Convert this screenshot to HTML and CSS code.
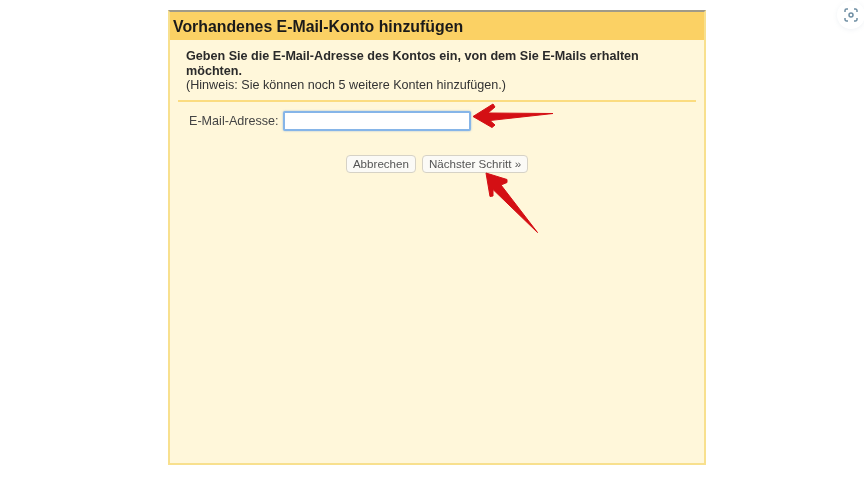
FILE: index.html
```html
<!DOCTYPE html>
<html lang="de">
<head>
<meta charset="utf-8">
<title>Vorhandenes E-Mail-Konto hinzufügen</title>
<link rel="stylesheet" href="styles.css">
</head>
<body>
<main class="panel">
  <h1 class="title">Vorhandenes E-Mail-Konto hinzufügen</h1>
  <div class="content">
    <div class="intro">
      <p class="lead">Geben Sie die E-Mail-Adresse des Kontos ein, von dem Sie E-Mails erhalten möchten.</p>
      <p class="hint">(Hinweis: Sie können noch 5 weitere Konten hinzufügen.)</p>
    </div>
    <div class="field">
      <label class="label" for="mail">E-Mail-Adresse:</label>
      <input class="input" id="mail" type="text">
    </div>
    <div class="actions">
      <button class="btn" type="button">Abbrechen</button>
      <button class="btn" type="button">Nächster Schritt »</button>
    </div>
  </div>
</main>
<svg class="arrows" viewBox="0 0 864 486" aria-hidden="true">
  <path d="M473 116.500L493 104L495 107L488 113L553 113.500L490 120.500L495 125L492 127.500Z"/>
  <path d="M486 173L507 179.500L507 182.500L501 185L537.500 232.500L493 189.500L493 196L490 196.500Z"/>
</svg>
<div class="lens">
  <svg class="lens-icon" viewBox="0 0 16 16" aria-hidden="true">
    <path d="M2 5V3.500A1.500 1.500 0 0 1 3.500 2H5M11 2h1.500A1.500 1.500 0 0 1 14 3.500V5M14 11v1.500a1.500 1.500 0 0 1-1.500 1.500H11M5 14H3.500A1.500 1.500 0 0 1 2 12.500V11"/>
    <circle cx="8" cy="8" r="2"/>
  </svg>
</div>
</body>
</html>
```

FILE: styles.css
```css
* { box-sizing: border-box; }
html, body { margin: 0; height: 100%; background: #fff; overflow: hidden; }
body { font-family: "Liberation Sans", Arial, sans-serif; color: #222; }

.panel {
  width: 538px;
  height: 455px;
  margin: 10px 0 0 168px;
  background: #fff7da;
  border: 2px solid #f8e08e;
  border-top: 2px solid #a09a88;
  filter: blur(0.4px);
}
.title {
  margin: 0;
  height: 28px;
  padding: 0 0 0 3px;
  background: #fbd164;
  font-size: 15.850px;
  font-weight: bold;
  line-height: 30px;
  color: #1a1a1a;
}
.content { padding: 0 8px; }
.intro { padding: 9px 8px 7px 8px; border-bottom: 2px solid #fbdc80; font-size: 12.600px; line-height: 14.500px; }
.lead { margin: 0; font-weight: bold; color: #2a2a2a; }
.hint { margin: 0; color: #333; }
.field { display: flex; align-items: center; margin-top: 9px; padding-left: 11px; gap: 4px; }
.label { font-size: 12.600px; color: #444; }
.input {
  width: 188px;
  height: 20px;
  border: 2px solid #86b5e8;
  border-radius: 2px;
  background: #fff;
  box-shadow: 0 0 2px rgba(110, 160, 220, 0.7);
  outline: 0;
}
.actions { display: flex; justify-content: center; gap: 6px; margin-top: 24px; }
.btn {
  height: 18px;
  padding: 0 6px;
  border: 1px solid #d6d2c6;
  border-radius: 4px;
  background: #fbfaf6;
  font-family: inherit;
  font-size: 11.600px;
  line-height: 15px;
  color: #555;
}

.arrows { position: absolute; inset: 0; width: 864px; height: 486px; pointer-events: none; }
.arrows path { fill: #d40f14; stroke: #d40f14; stroke-width: 1; stroke-linejoin: round; filter: blur(0.4px); }

.lens {
  position: absolute;
  top: 1px;
  left: 837px;
  width: 28px;
  height: 28px;
  border-radius: 50%;
  background: #fff;
  box-shadow: 0 1px 4px rgba(120, 150, 170, 0.12);
  display: flex;
  align-items: center;
  justify-content: center;
}
.lens-icon { width: 16px; height: 16px; fill: none; stroke: #6f8ea3; stroke-width: 1.500; }
```
